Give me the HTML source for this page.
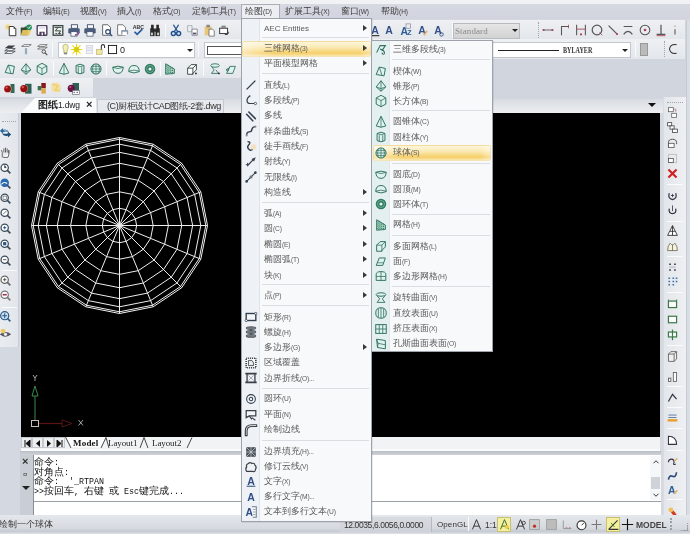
<!DOCTYPE html>
<html><head><meta charset="utf-8"><style>
*{margin:0;padding:0;box-sizing:border-box}
body{width:690px;height:534px;overflow:hidden;position:relative;will-change:transform;background:#d4d9e1;font-family:"Liberation Sans",sans-serif;font-size:9px;color:#333}
.a{position:absolute}
.mi{position:absolute;top:5px;font-size:9px;color:#3a3a3a;white-space:nowrap;line-height:13px}
.mi small{font-size:6.5px}
.dd{background:#f8f9fb;border:1px solid #9ea3ab;box-shadow:1px 1px 0 rgba(0,0,0,.08)}
.it{font-size:9px;color:#5a5a5a;white-space:nowrap;line-height:13px}
.it small{font-size:6.7px;letter-spacing:-0.2px}
.arr{width:0;height:0;border-left:4px solid #3a3a3a;border-top:3.5px solid transparent;border-bottom:3.5px solid transparent}
.hl{border:1px solid rgba(238,214,150,.55);border-radius:2px;background:linear-gradient(90deg,rgba(255,255,255,.45),rgba(255,255,255,0) 25%,rgba(255,255,255,0) 92%,rgba(255,255,255,.35)),linear-gradient(#fdf6dc,#fbe9b0 40%,#f6cf68 80%,#fae6ae)}
.tb{background:linear-gradient(#eef0f3,#e3e6eb)}
.vs{width:1px;background:#c3c8cf;border-right:1px solid #fafbfc}
.hs{height:1px;background:#c9ced5;border-bottom:1px solid #fafbfc}
.mono{font-family:"Liberation Mono",monospace}
</style></head><body>
<div class="a" style="left:0;top:0;width:690px;height:4px;background:#f1f2f4"></div>
<div class="a" style="left:0;top:4px;width:690px;height:15px;background:linear-gradient(#d6d9e2,#d1d4de)"></div>
<div class="mi" style="left:6px">文件<small>(F)</small></div>
<div class="mi" style="left:43px">编辑<small>(E)</small></div>
<div class="mi" style="left:80px">视图<small>(V)</small></div>
<div class="mi" style="left:117px">插入<small>(I)</small></div>
<div class="mi" style="left:153px">格式<small>(O)</small></div>
<div class="mi" style="left:191.5px">定制工具<small>(T)</small></div>
<div class="a" style="left:241px;top:4px;width:39px;height:15px;background:#eceef2;border:1px solid #a9aeb6;border-bottom:none"></div>
<div class="mi" style="left:245px">绘图<small>(D)</small></div>
<div class="mi" style="left:285px">扩展工具<small>(X)</small></div>
<div class="mi" style="left:340.5px">窗口<small>(W)</small></div>
<div class="mi" style="left:381px">帮助<small>(H)</small></div>
<div class="a" style="left:0;top:20px;width:690px;height:93px;background:#d1d6de"></div>
<div class="a" style="left:0;top:99px;width:690px;height:14px;background:linear-gradient(#d8dce2,#eceef1)"></div>
<div class="a tb" style="left:0;top:20px;width:685px;height:19px"></div>
<div class="a tb" style="left:0;top:39px;width:685px;height:20px"></div>
<div class="a tb" style="left:0;top:59px;width:242px;height:19px"></div>
<div class="a tb" style="left:0;top:78px;width:93px;height:19px"></div>
<div class="a" style="left:686px;top:20px;width:4px;height:496px;background:#d9dee5;border-left:1px solid #c3cad3"></div>
<svg class="a" style="left:3.5px;top:23.0px" width="14" height="14" viewBox="0 0 16 16"><circle cx="4.5" cy="4.5" r="3.5" fill="#f6e2a8" opacity=".9"/><path d="M3 4L6 5M4.5 2V7M2 5.5L7 3.5" stroke="#e8c060" stroke-width=".7"/><path d="M6 4H11L13.5 6.5V14.5H6Z" fill="#fff" stroke="#333" stroke-width="1.1"/><path d="M11 4V6.5H13.5" fill="#333"/></svg>
<svg class="a" style="left:19.0px;top:23.0px" width="14" height="14" viewBox="0 0 16 16"><path d="M2 5H6L7 4H10V14H2Z" fill="#3e4a30"/><path d="M4 8H14L12 14H2Z" fill="#eccb60" opacity=".9"/><circle cx="11.5" cy="5" r="3.2" fill="#2a8a60"/><path d="M10 5L11.3 6.3L13.3 3.6" stroke="#d8f8e8" fill="none" stroke-width="1.1"/></svg>
<svg class="a" style="left:35.0px;top:23.0px" width="14" height="14" viewBox="0 0 16 16"><rect x="2.5" y="3" width="11" height="11" fill="#fff" stroke="#4a3e58" stroke-width="1.6" rx=".5"/><path d="M4.5 3.5H11.5V7H4.5Z" fill="#e8e0f0"/><path d="M5 10H11V14H5Z" fill="#4a3e58"/><rect x="7.5" y="11" width="1.5" height="3" fill="#fff"/></svg>
<svg class="a" style="left:51.3px;top:23.0px" width="14" height="14" viewBox="0 0 16 16"><rect x="2.5" y="3" width="11" height="11" fill="#e8eee8" stroke="#404848" stroke-width="1.5"/><path d="M4 5H12M8 5L5 9H11L8 13M5 12H7M10 11V13M9 12H11" stroke="#3a4444" stroke-width="1.1" fill="none"/></svg>
<svg class="a" style="left:67.0px;top:23.0px" width="14" height="14" viewBox="0 0 16 16"><rect x="5" y="2" width="7" height="4" fill="#fff" stroke="#3a4a6a" stroke-width="1"/><rect x="1.5" y="6" width="13" height="6" fill="#4a5a7a" rx="1.5"/><rect x="4.5" y="10" width="7" height="5" fill="#fff" stroke="#3a4a6a" stroke-width=".8"/><path d="M9 13.5Q13.5 14 13.5 10" stroke="#8a5a9a" fill="none" stroke-width="1.8"/></svg>
<svg class="a" style="left:83.0px;top:23.0px" width="14" height="14" viewBox="0 0 16 16"><rect x="5" y="2" width="7" height="4" fill="#fff" stroke="#3a4a6a" stroke-width="1"/><rect x="1.5" y="6" width="13" height="6" fill="#4a5a7a" rx="1.5"/><rect x="4.5" y="10" width="7" height="5" fill="#fff" stroke="#3a4a6a" stroke-width=".8"/></svg>
<svg class="a" style="left:100.0px;top:23.0px" width="14" height="14" viewBox="0 0 16 16"><path d="M3 2H9L12 5V14H3Z" fill="#fff" stroke="#555" stroke-width="1"/><circle cx="9" cy="10" r="2.5" fill="none" stroke="#2a4a7a" stroke-width="1.3"/><path d="M11 12L14 15" stroke="#2a4a7a" stroke-width="1.5"/></svg>
<svg class="a" style="left:115.0px;top:23.0px" width="14" height="14" viewBox="0 0 16 16"><path d="M3 2H9L12 5V14H3Z" fill="#fff" stroke="#666" stroke-width="1"/><rect x="7" y="8" width="8" height="5" fill="#8a9aaa" rx="1"/><rect x="8.5" y="10" width="5" height="4" fill="#fff"/></svg>
<svg class="a" style="left:131.0px;top:23.0px" width="14" height="14" viewBox="0 0 16 16"><text x="8.5" y="7" font-size="6" font-weight="bold" text-anchor="middle" fill="#333" font-family="Liberation Sans">ABC</text><path d="M4 10L7 13L13 7" stroke="#2a5aa0" stroke-width="2" fill="none"/></svg>
<svg class="a" style="left:148.0px;top:23.0px" width="14" height="14" viewBox="0 0 16 16"><rect x="2.5" y="6" width="5" height="9" fill="#2a2a2a"/><rect x="8.5" y="6" width="5" height="9" fill="#2a2a2a"/><rect x="3.5" y="2" width="3" height="5" fill="#2a2a2a"/><rect x="9.5" y="2" width="3" height="5" fill="#2a2a2a"/><rect x="6" y="7" width="4" height="3" fill="#2a2a2a"/><rect x="3.5" y="11" width="2" height="3" fill="#ddd"/><rect x="10.5" y="11" width="2" height="3" fill="#ddd"/></svg>
<svg class="a" style="left:169.0px;top:23.0px" width="14" height="14" viewBox="0 0 16 16"><path d="M5 2L10 10M11 2L6 10" stroke="#1f4f8f" stroke-width="1.5"/><circle cx="5" cy="12" r="2.3" fill="none" stroke="#1f4f8f" stroke-width="1.6"/><circle cx="11" cy="12" r="2.3" fill="none" stroke="#1f4f8f" stroke-width="1.6"/></svg>
<svg class="a" style="left:185.0px;top:23.0px" width="14" height="14" viewBox="0 0 16 16"><path d="M3 3H8V10H3Z" fill="#eee" stroke="#8aa0a0" stroke-width=".8"/><path d="M8 7H14V14H8Z" fill="#fff" stroke="#667" stroke-width=".8"/><rect x="9" y="11" width="4" height="2" fill="#556"/></svg>
<svg class="a" style="left:202.0px;top:23.0px" width="14" height="14" viewBox="0 0 16 16"><rect x="3" y="4" width="8" height="10" fill="#e8c878"/><rect x="5" y="2" width="4" height="3" fill="#888"/><path d="M8 7H12L14 9V15H8Z" fill="#fff" stroke="#555" stroke-width=".8"/></svg>
<svg class="a" style="left:217.0px;top:23.0px" width="14" height="14" viewBox="0 0 16 16"><rect x="3" y="6" width="9" height="6" fill="#fff" stroke="#444" stroke-width="1.2"/><rect x="5" y="3" width="5" height="3" fill="#888"/><path d="M9 13Q13 14 13 10" stroke="#444" fill="none" stroke-width="1.2"/></svg>
<div class="a vs" style="left:165px;top:23px;height:14px"></div>
<svg class="a" style="left:368.0px;top:23.0px" width="14" height="14" viewBox="0 0 16 16"><text x="8" y="13" font-size="12" font-weight="bold" fill="#34508a" text-anchor="middle" font-family="Liberation Sans">A</text><path d="M3 14.5H13" stroke="#222" stroke-width="1.2"/></svg>
<svg class="a" style="left:382.0px;top:23.0px" width="14" height="14" viewBox="0 0 16 16"><text x="8" y="13" font-size="12" font-weight="bold" fill="#34508a" text-anchor="middle" font-family="Liberation Sans">A</text></svg>
<svg class="a" style="left:399.0px;top:23.0px" width="14" height="14" viewBox="0 0 16 16"><text x="6" y="14" font-size="12" font-weight="bold" fill="#2f5f96" text-anchor="middle" font-family="Liberation Sans">A</text><text x="12" y="14" font-size="8" font-weight="bold" fill="#2f5f96" text-anchor="middle" font-family="Liberation Sans">Z</text><rect x="8" y="1" width="5" height="5" fill="none" stroke="#889" stroke-width=".8"/></svg>
<svg class="a" style="left:415.0px;top:23.0px" width="14" height="14" viewBox="0 0 16 16"><text x="8" y="13" font-size="12" font-weight="bold" fill="#34508a" text-anchor="middle" font-family="Liberation Sans">A</text><path d="M10 14L14 9" stroke="#e0b070" stroke-width="2"/></svg>
<svg class="a" style="left:430.5px;top:23.0px" width="14" height="14" viewBox="0 0 16 16"><text x="8" y="13" font-size="12" font-weight="bold" fill="#34508a" text-anchor="middle" font-family="Liberation Sans">A</text><circle cx="12" cy="13" r="2" fill="none" stroke="#2f4f86"/></svg>
<div class="a vs" style="left:452px;top:22px;height:16px"></div>
<div class="a" style="left:453px;top:23px;width:67px;height:16px;background:linear-gradient(#e6e6e6,#d2d2d2);border:1px solid #b8bcc2"></div>
<div class="a" style="left:455px;top:26px;font-size:9px;color:#8a8a8a;line-height:10px;font-family:Liberation Serif;letter-spacing:0.1px">Standard</div>
<div class="a arr" style="left:512px;top:29px;border-left:3px solid transparent;border-right:3px solid transparent;border-top:3px solid #222;border-bottom:0"></div>
<div class="a" style="left:538px;top:22px;width:1px;height:16px;border-left:1px dotted #a0a6ae"></div>
<svg class="a" style="left:541.0px;top:23.0px" width="14" height="14" viewBox="0 0 16 16"><path d="M2 8H14" stroke="#555" stroke-width="1"/><circle cx="3" cy="8" r="1.2" fill="#b04050"/><circle cx="13" cy="8" r="1.2" fill="#b04050"/></svg>
<svg class="a" style="left:558.0px;top:23.0px" width="14" height="14" viewBox="0 0 16 16"><path d="M4 14V4H12" stroke="#555" stroke-width="1.2" fill="none"/><path d="M12 2V6" stroke="#b04050"/></svg>
<svg class="a" style="left:574.0px;top:23.0px" width="14" height="14" viewBox="0 0 16 16"><path d="M3 2V14M13 2V14" stroke="#555" stroke-width="1.2"/><path d="M3 7H13" stroke="#b04050"/><circle cx="8" cy="13" r="1.2" fill="#b04050"/></svg>
<svg class="a" style="left:590.0px;top:23.0px" width="14" height="14" viewBox="0 0 16 16"><circle cx="8" cy="8" r="5.5" fill="none" stroke="#555" stroke-width="1.4"/><path d="M11 11L14 14" stroke="#b04050"/></svg>
<svg class="a" style="left:606.0px;top:23.0px" width="14" height="14" viewBox="0 0 16 16"><path d="M3 3L13 13" stroke="#555" stroke-width="1.4"/><circle cx="12.5" cy="12.5" r="1.2" fill="#b04050"/></svg>
<svg class="a" style="left:621.0px;top:23.0px" width="14" height="14" viewBox="0 0 16 16"><path d="M3 13Q8 6 13 13" stroke="#555" stroke-width="1.4" fill="none"/><path d="M3 4H13" stroke="#555" stroke-width="1.2"/></svg>
<svg class="a" style="left:638.0px;top:23.0px" width="14" height="14" viewBox="0 0 16 16"><circle cx="8" cy="8" r="5.5" fill="none" stroke="#555" stroke-width="1.2"/><circle cx="8" cy="8" r="1.5" fill="#b04050"/></svg>
<svg class="a" style="left:654.0px;top:23.0px" width="14" height="14" viewBox="0 0 16 16"><path d="M8 2V13M3 13H13" stroke="#555" stroke-width="1.4"/><path d="M3 14.5H13" stroke="#b04050"/></svg>
<svg class="a" style="left:668.0px;top:23.0px" width="14" height="14" viewBox="0 0 16 16"><path d="M8 3V4M8 7V13" stroke="#555" stroke-width="1.2"/></svg>
<svg class="a" style="left:2.5999999999999996px;top:41.5px" width="14" height="14" viewBox="0 0 16 16"><path d="M2 7L6 4H14L10 7Z" fill="#3a3f48"/><path d="M2 10L6 7.5H14L10 10Z" fill="#fff" stroke="#3a3f48" stroke-width=".9"/><path d="M2 13L6 10.5H14L10 13Z" fill="#fff" stroke="#3a3f48" stroke-width=".9"/></svg>
<svg class="a" style="left:18.5px;top:41.5px" width="14" height="14" viewBox="0 0 16 16"><path d="M3 5L6 3H14L11 5Z" fill="#fff" stroke="#555" stroke-width=".8"/><path d="M8 7V14" stroke="#9ab" stroke-width="2.5"/></svg>
<svg class="a" style="left:35.0px;top:41.5px" width="14" height="14" viewBox="0 0 16 16"><path d="M3 5L6 3H14L11 5Z" fill="#fff" stroke="#555" stroke-width=".8"/><path d="M3 8L6 6H14L11 8Z" fill="#fff" stroke="#555" stroke-width=".8"/><circle cx="10" cy="11" r="2" fill="none" stroke="#444" stroke-width="1"/><path d="M11.5 12.5L14 15" stroke="#444" stroke-width="1.2"/></svg>
<div class="a vs" style="left:52px;top:42px;height:15px"></div>
<div class="a" style="left:58px;top:42px;width:137px;height:16px;background:#fff;border:1px solid #c2c7ce"></div>
<svg class="a" style="left:58.5px;top:43.0px" width="13" height="13" viewBox="0 0 16 16"><path d="M5 3Q8 0 11 3Q12 6 10 9V12H6V9Q4 6 5 3Z" fill="#f4f0b0" stroke="#9a9a60" stroke-width=".8"/><rect x="6" y="12" width="4" height="2" fill="#888"/></svg>
<svg class="a" style="left:70.0px;top:43.0px" width="13" height="13" viewBox="0 0 16 16"><circle cx="8" cy="8" r="3.5" fill="#f0e020"/><path d="M8 1V15M1 8H15M3 3L13 13M13 3L3 13" stroke="#e8d818" stroke-width="1.3"/><circle cx="8" cy="8" r="3" fill="#d8c810"/></svg>
<svg class="a" style="left:82.5px;top:43.0px" width="13" height="13" viewBox="0 0 16 16"><rect x="4" y="3" width="8" height="10" fill="#f2f2f6" stroke="#c8c8d8" stroke-width=".8"/><path d="M5 6H11M5 9H11" stroke="#c8c8d8"/></svg>
<svg class="a" style="left:93.5px;top:43.0px" width="13" height="13" viewBox="0 0 16 16"><rect x="3" y="8" width="7" height="6" fill="#f0e8a0" stroke="#b8b070" stroke-width=".8"/><path d="M9 8V4Q9 2 11 2Q13 2 13 4V6" stroke="#333" stroke-width="1.3" fill="none"/></svg>
<svg class="a" style="left:105.5px;top:43.0px" width="13" height="13" viewBox="0 0 16 16"><rect x="3" y="3" width="10" height="10" fill="#fff" stroke="#222" stroke-width="1.2"/></svg>
<div class="a" style="left:120px;top:44px;font-size:9px;color:#222;line-height:12px">0</div>
<div class="a arr" style="left:187px;top:49px;border-left:3px solid transparent;border-right:3px solid transparent;border-top:3px solid #222;border-bottom:0"></div>
<div class="a vs" style="left:198px;top:42px;height:15px"></div>
<div class="a" style="left:204px;top:42px;width:40px;height:16px;background:#fff;border:1px solid #c2c7ce"></div>
<div class="a" style="left:207px;top:46px;width:40px;height:9px;background:#fff;border:1.5px solid #555"></div>
<div class="a" style="left:490px;top:42px;width:141px;height:16px;background:#fff;border:1px solid #c2c7ce"></div>
<div class="a" style="left:498px;top:49.5px;width:61px;height:1px;background:#222"></div>
<div class="a" style="left:563px;top:45px;font-size:9px;font-weight:bold;color:#333;line-height:10px;font-family:Liberation Serif;transform:scaleX(0.68);transform-origin:0 0">BYLAYER</div>
<div class="a arr" style="left:622px;top:49px;border-left:3px solid transparent;border-right:3px solid transparent;border-top:3px solid #222;border-bottom:0"></div>
<div class="a vs" style="left:635px;top:42px;height:15px"></div>
<div class="a" style="left:640px;top:43px;width:8px;height:13px;background:#bbb;border:1px solid #999"></div>
<div class="a" style="left:664px;top:41px;width:1px;height:16px;border-left:1px dotted #a0a6ae"></div>
<svg class="a" style="left:666.0px;top:42.0px" width="14" height="14" viewBox="0 0 16 16"><path d="M12 3Q5 2 4 8Q5 14 12 13" stroke="#333" stroke-width="1.2" fill="none"/></svg>
<div class="a vs" style="left:53px;top:61px;height:15px"></div>
<div class="a vs" style="left:106px;top:61px;height:15px"></div>
<div class="a vs" style="left:160px;top:61px;height:15px"></div>
<div class="a vs" style="left:203px;top:61px;height:15px"></div>
<svg class="a" style="left:2.5999999999999996px;top:62.0px" width="14" height="14" viewBox="0 0 16 16"><path d="M2.5 12L6 3.5L13 5L11.5 13.5Z" stroke="#2f7060" stroke-width="1.1" fill="#dff2ec"/><path d="M6 3.5L9 12.5" stroke="#2f7060" stroke-width=".9"/></svg>
<svg class="a" style="left:19.0px;top:62.0px" width="14" height="14" viewBox="0 0 16 16"><path d="M8 2L13.5 9L8 14L2.5 9Z" stroke="#2f7060" stroke-width="1.1" fill="#dff2ec"/><path d="M8 2V14M2.5 9L8 11L13.5 9" stroke="#2f7060" stroke-width=".9" fill="none"/></svg>
<svg class="a" style="left:34.7px;top:62.0px" width="14" height="14" viewBox="0 0 16 16"><path d="M8 1.5L13.5 4.5V11.5L8 14.5L2.5 11.5V4.5Z" stroke="#2f7060" stroke-width="1.1" fill="#dff2ec"/><path d="M2.5 4.5L8 7.5L13.5 4.5M8 7.5V14.5" stroke="#2f7060" stroke-width=".9" fill="none"/></svg>
<svg class="a" style="left:56.5px;top:62.0px" width="14" height="14" viewBox="0 0 16 16"><path d="M8 1.5L13.5 12.5Q8 15.5 2.5 12.5Z" stroke="#2f7060" stroke-width="1.1" fill="#dff2ec"/><path d="M8 1.5L8 14" stroke="#2f7060" stroke-width=".8"/></svg>
<svg class="a" style="left:73.0px;top:62.0px" width="14" height="14" viewBox="0 0 16 16"><path d="M3.5 4V12Q8 15 12.5 12V4Q8 1 3.5 4Z" stroke="#2f7060" stroke-width="1.1" fill="#dff2ec"/><path d="M3.5 4Q8 7 12.5 4M6 6V13.5M10 6V13.5" stroke="#2f7060" stroke-width=".9" fill="none"/></svg>
<svg class="a" style="left:88.6px;top:62.0px" width="14" height="14" viewBox="0 0 16 16"><circle cx="8" cy="8" r="5.8" stroke="#2f7060" stroke-width="1.1" fill="#dff2ec"/><path d="M2.2 8H13.8M8 2.2V13.8M5 3Q3 8 5 13M11 3Q13 8 11 13M3 5H13M3 11H13" stroke="#2f7060" stroke-width="0.8" fill="none"/></svg>
<svg class="a" style="left:110.5px;top:62.0px" width="14" height="14" viewBox="0 0 16 16"><path d="M2 6Q8 3.5 14 6Q13.5 13 8 13Q2.5 13 2 6Z" stroke="#2f7060" stroke-width="1.1" fill="#dff2ec"/><path d="M2 6Q8 9 14 6" stroke="#2f7060" stroke-width=".9" fill="none"/></svg>
<svg class="a" style="left:127.0px;top:62.0px" width="14" height="14" viewBox="0 0 16 16"><path d="M2 11Q2 4 8 4Q14 4 14 11Q8 14 2 11Z" stroke="#2f7060" stroke-width="1.1" fill="#dff2ec"/><path d="M2 10.5Q8 8 14 10.5" stroke="#2f7060" stroke-width=".9" fill="none"/></svg>
<svg class="a" style="left:142.5px;top:62.0px" width="14" height="14" viewBox="0 0 16 16"><circle cx="8" cy="8" r="6" fill="#2f7a60"/><circle cx="8" cy="8" r="4" fill="none" stroke="#8fcfb0" stroke-width=".7"/><circle cx="8" cy="8" r="1.8" fill="#e8f8f0"/></svg>
<svg class="a" style="left:163.4px;top:62.0px" width="14" height="14" viewBox="0 0 16 16"><path d="M3 2L8 5L13 8V13L3 14Z" fill="#a8d8c0" stroke="#2f7060" stroke-width="1"/><path d="M3 4.5H8M3 7H11M3 9.5H13M3 12H13M5.5 3V14M8 5V14M10.5 6.5V14" stroke="#2f7060" stroke-width="0.9" stroke-dasharray="1.2 1.2"/></svg>
<svg class="a" style="left:185.0px;top:62.0px" width="14" height="14" viewBox="0 0 16 16"><path d="M3 14V7L7 3H13V9L9 13V14Z M3 7H9V14 M9 7L13 3" stroke="#2a3a3a" stroke-width="1" fill="#fff"/><circle cx="12.5" cy="13" r="1" fill="#222"/></svg>
<svg class="a" style="left:207.5px;top:62.0px" width="14" height="14" viewBox="0 0 16 16"><ellipse cx="8" cy="4" rx="5" ry="2" stroke="#2f7060" stroke-width="1" fill="#dff2ec"/><path d="M4 5L7 9L4 13H12L9 9" stroke="#2f7060" stroke-width="1" fill="none"/><circle cx="12.5" cy="13" r="1" fill="#222"/></svg>
<svg class="a" style="left:224.0px;top:62.0px" width="14" height="14" viewBox="0 0 16 16"><path d="M3 13L7 5H13L10 13Z M7 5L4 9" stroke="#2f7060" stroke-width="1" fill="#dff2ec"/><circle cx="4" cy="9" r="1.3" fill="none" stroke="#2f7060"/></svg>
<svg class="a" style="left:0;top:78px" width="95" height="20" viewBox="0 78 95 20"><rect x="10.5" y="84" width="4" height="9" fill="#2f6a58"/><circle cx="7.6" cy="88.9" r="4" fill="#f4c8c8" opacity=".6"/><circle cx="7.6" cy="88.9" r="3.4" fill="#9a1010"/><circle cx="6.6" cy="87.6" r="1.1" fill="#d86060"/><rect x="25" y="83.8" width="6.5" height="9.8" fill="#2a5e50"/><circle cx="23.9" cy="88.6" r="4.1" fill="#f4c8c8" opacity=".6"/><circle cx="23.9" cy="88.6" r="3.6" fill="#9a1010"/><circle cx="22.8" cy="87.2" r="1.1" fill="#d86060"/><rect x="41.3" y="83" width="4.5" height="5.2" fill="#8a1818"/><rect x="37.7" y="86" width="3.8" height="4.3" fill="#3a7050"/><rect x="41.3" y="88.2" width="4.5" height="5.4" fill="#e0a850"/><circle cx="56" cy="87.5" r="5" fill="#f4dc90" opacity=".75"/><path d="M52 84L58 86L55 90L60 91" stroke="#f0d070" stroke-width="1.5" fill="none"/><rect x="72.5" y="83" width="6.5" height="10" fill="#2f6058"/><circle cx="71.3" cy="88.3" r="3.6" fill="#6a1440"/><circle cx="70.3" cy="87" r="1" fill="#b06080"/><rect x="72.5" y="90.3" width="7" height="4" fill="#fff" stroke="#445" stroke-width=".5"/><path d="M73.5 92.3H75M76.5 92.3H78" stroke="#556" stroke-width="1"/></svg>
<div class="a" style="left:21px;top:98px;width:75px;height:15px;background:#fafbfc;clip-path:polygon(0 100%,14px 0,100% 0,100% 100%)"></div>
<div class="a" style="left:38px;top:99px;font-size:10px;font-weight:bold;color:#222;line-height:12px;white-space:nowrap">图纸<span style="font-weight:normal;font-size:8.5px;letter-spacing:-0.2px">1.dwg</span></div>
<div class="a" style="left:86px;top:98px;font-size:11px;font-weight:bold;color:#222;line-height:12px">×</div>
<div class="a" style="left:97px;top:99px;width:127px;height:14px;background:#e6e9ed;border:1px solid #c5cad1;border-bottom:none"></div>
<div class="a" style="left:107px;top:100px;font-size:9px;color:#333;line-height:12px;white-space:nowrap;letter-spacing:-0.4px">(C)厨柜设计CAD图纸-2套.dwg</div>
<div class="a" style="left:648px;top:103px;width:0;height:0;border-left:4px solid transparent;border-right:4px solid transparent;border-top:4px solid #111"></div>
<div class="a" style="left:21px;top:113px;width:639px;height:324px;background:#000"></div>
<svg class="a" style="left:0;top:0" width="690" height="534"><g fill="none" stroke="#efefef" stroke-width="1"><polygon points="136.67,225.50 135.36,218.93 131.64,213.36 126.07,209.64 119.50,208.33 112.93,209.64 107.36,213.36 103.64,218.93 102.33,225.50 103.64,232.07 107.36,237.64 112.93,241.36 119.50,242.67 126.07,241.36 131.64,237.64 135.36,232.07"/>
<polygon points="153.18,225.50 150.61,212.61 143.31,201.69 132.39,194.39 119.50,191.82 106.61,194.39 95.69,201.69 88.39,212.61 85.82,225.50 88.39,238.39 95.69,249.31 106.61,256.61 119.50,259.18 132.39,256.61 143.31,249.31 150.61,238.39"/>
<polygon points="168.39,225.50 164.67,206.79 154.07,190.93 138.21,180.33 119.50,176.61 100.79,180.33 84.93,190.93 74.33,206.79 70.61,225.50 74.33,244.21 84.93,260.07 100.79,270.67 119.50,274.39 138.21,270.67 154.07,260.07 164.67,244.21"/>
<polygon points="181.73,225.50 176.99,201.69 163.50,181.50 143.31,168.01 119.50,163.27 95.69,168.01 75.50,181.50 62.01,201.69 57.27,225.50 62.01,249.31 75.50,269.50 95.69,282.99 119.50,287.73 143.31,282.99 163.50,269.50 176.99,249.31"/>
<polygon points="192.67,225.50 187.10,197.50 171.24,173.76 147.50,157.90 119.50,152.33 91.50,157.90 67.76,173.76 51.90,197.50 46.33,225.50 51.90,253.50 67.76,277.24 91.50,293.10 119.50,298.67 147.50,293.10 171.24,277.24 187.10,253.50"/>
<polygon points="200.80,225.50 194.61,194.39 176.99,168.01 150.61,150.39 119.50,144.20 88.39,150.39 62.01,168.01 44.39,194.39 38.20,225.50 44.39,256.61 62.01,282.99 88.39,300.61 119.50,306.80 150.61,300.61 176.99,282.99 194.61,256.61"/>
<polygon points="205.81,225.50 199.24,192.47 180.53,164.47 152.53,145.76 119.50,139.19 86.47,145.76 58.47,164.47 39.76,192.47 33.19,225.50 39.76,258.53 58.47,286.53 86.47,305.24 119.50,311.81 152.53,305.24 180.53,286.53 199.24,258.53"/>
<polygon points="207.50,225.50 200.80,191.82 181.73,163.27 153.18,144.20 119.50,137.50 85.82,144.20 57.27,163.27 38.20,191.82 31.50,225.50 38.20,259.18 57.27,287.73 85.82,306.80 119.50,313.50 153.18,306.80 181.73,287.73 200.80,259.18"/>
<line x1="207.50" y1="225.50" x2="31.50" y2="225.50"/>
<line x1="200.80" y1="191.82" x2="38.20" y2="259.18"/>
<line x1="181.73" y1="163.27" x2="57.27" y2="287.73"/>
<line x1="153.18" y1="144.20" x2="85.82" y2="306.80"/>
<line x1="119.50" y1="137.50" x2="119.50" y2="313.50"/>
<line x1="85.82" y1="144.20" x2="153.18" y2="306.80"/>
<line x1="57.27" y1="163.27" x2="181.73" y2="287.73"/>
<line x1="38.20" y1="191.82" x2="200.80" y2="259.18"/>
</g><g fill="none"><path d="M35 420V396" stroke="#3c8a4c" stroke-width="1"/><path d="M35 386L32 396H38Z" stroke="#3c8a4c" stroke-width="1"/><path d="M39 423.5H62" stroke="#5a1414" stroke-width="1.2"/><path d="M72 423.5L62 420V427Z" stroke="#5a1414" stroke-width="1"/><rect x="31.5" y="420.5" width="7" height="6" stroke="#c8c0b8" stroke-width="1"/><path d="M33 375L35 378L37 375M35 378V381" stroke="#ccc" stroke-width=".8"/><path d="M78.5 420L83 425.5M83 420L78.5 425.5" stroke="#ccc" stroke-width=".8"/></g></svg>
<div class="a" style="left:0;top:113px;width:19px;height:234px;background:linear-gradient(90deg,#e9ecf0,#e2e5ea);border-right:1px solid #c8cdd4"></div>
<div class="a" style="left:2px;top:121px;width:14px;height:1px;border-top:1px dotted #a0a6ae"></div>
<svg class="a" style="left:-1.0px;top:126.19999999999999px" width="13" height="13" viewBox="0 0 16 16"><path d="M1 6L5 2.5V4.5Q11 3.5 12 8Q9 6 5 7.5V9.5Z" fill="#2a6a9a"/><path d="M15 10.5L11 14V12Q5 13 4 8.5Q7 10.5 11 9V7Z" fill="#1f4f7a"/><path d="M6 5.5Q9 5 10.5 6.5" stroke="#a8d0f0" stroke-width=".8" fill="none"/></svg>
<svg class="a" style="left:-1.0px;top:145.9px" width="13" height="13" viewBox="0 0 16 16"><path d="M4 14V8L3 5M6 8V3M8 8V2M10 8V3M12 9V5Q13 10 11 14H5" stroke="#555" stroke-width="1.1" fill="#fff"/></svg>
<svg class="a" style="left:-1.0px;top:161.6px" width="13" height="13" viewBox="0 0 16 16"><circle cx="7" cy="7" r="4.5" fill="#fff" stroke="#3a4a5a" stroke-width="1.5"/><path d="M10 10L14 14" stroke="#3a4a5a" stroke-width="2"/><path d="M7 4V7H9" stroke="#3a4a5a"/></svg>
<svg class="a" style="left:-1.0px;top:177.4px" width="13" height="13" viewBox="0 0 16 16"><circle cx="7" cy="7" r="4.5" fill="#2a6ab0" stroke="#2a6ab0" stroke-width="1.5"/><path d="M10 10L14 14" stroke="#3a4a5a" stroke-width="2"/><path d="M3 9Q6 5 10 8" stroke="#fff" stroke-width="1.3" fill="none"/></svg>
<svg class="a" style="left:-1.0px;top:192.2px" width="13" height="13" viewBox="0 0 16 16"><circle cx="7" cy="7" r="4.5" fill="#fff" stroke="#3a4a5a" stroke-width="1.5"/><path d="M10 10L14 14" stroke="#3a4a5a" stroke-width="2"/><rect x="5" y="5" width="4" height="4" fill="none" stroke="#555" stroke-width=".8"/></svg>
<svg class="a" style="left:-1.0px;top:206.9px" width="13" height="13" viewBox="0 0 16 16"><circle cx="7" cy="7" r="4.5" fill="#fff" stroke="#3a4a5a" stroke-width="1.5"/><path d="M10 10L14 14" stroke="#3a4a5a" stroke-width="2"/><path d="M5 9L9 5" stroke="#555"/></svg>
<svg class="a" style="left:-1.0px;top:222.2px" width="13" height="13" viewBox="0 0 16 16"><circle cx="7" cy="7" r="4.5" fill="#fff" stroke="#3a4a5a" stroke-width="1.5"/><path d="M10 10L14 14" stroke="#3a4a5a" stroke-width="2"/><path d="M5 7H9M7 5V9" stroke="#2a5a8a" stroke-width="1.2"/></svg>
<svg class="a" style="left:-1.0px;top:237.9px" width="13" height="13" viewBox="0 0 16 16"><circle cx="7" cy="7" r="4.5" fill="#fff" stroke="#3a4a5a" stroke-width="1.5"/><path d="M10 10L14 14" stroke="#3a4a5a" stroke-width="2"/><rect x="5" y="5" width="4" height="4" fill="#2a5a8a"/></svg>
<svg class="a" style="left:-1.0px;top:253.7px" width="13" height="13" viewBox="0 0 16 16"><circle cx="7" cy="7" r="4.5" fill="#fff" stroke="#3a4a5a" stroke-width="1.5"/><path d="M10 10L14 14" stroke="#3a4a5a" stroke-width="2"/><path d="M5 7H9" stroke="#555" stroke-width="1.2"/></svg>
<svg class="a" style="left:-1.0px;top:274.4px" width="13" height="13" viewBox="0 0 16 16"><circle cx="7" cy="7" r="4.5" fill="#fff" stroke="#666" stroke-width="1.5"/><path d="M10 10L14 14" stroke="#666" stroke-width="2"/><path d="M5 7H9M7 5V9" stroke="#555" stroke-width="1.2"/></svg>
<svg class="a" style="left:-1.0px;top:289.1px" width="13" height="13" viewBox="0 0 16 16"><circle cx="7" cy="7" r="4.5" fill="#fff" stroke="#777" stroke-width="1.5"/><path d="M10 10L14 14" stroke="#777" stroke-width="2"/><path d="M4.5 7H9.5" stroke="#a03050" stroke-width="2"/></svg>
<svg class="a" style="left:-1.0px;top:310.2px" width="13" height="13" viewBox="0 0 16 16"><circle cx="7" cy="7" r="5" fill="#cfe0f0" stroke="#2a5a8a" stroke-width="1.5"/><path d="M4 7H10M7 4V10" stroke="#2a5a8a" stroke-width="1.3"/><path d="M10.5 10.5L14 14" stroke="#2a5a8a" stroke-width="2"/></svg>
<svg class="a" style="left:-1.0px;top:327.0px" width="13" height="13" viewBox="0 0 16 16"><path d="M1 9Q8 3 15 9Q8 15 1 9Z" fill="#556"/><circle cx="8" cy="9" r="2" fill="#eee"/><circle cx="5" cy="5" r="3" fill="#f0c860"/></svg>
<div class="a hs" style="left:2px;top:270px;width:15px"></div>
<div class="a hs" style="left:2px;top:306.5px;width:15px"></div>
<div class="a" style="left:663px;top:97px;width:23px;height:419px;background:linear-gradient(90deg,#e3e6ea,#eef0f3);border-left:1px solid #d8dce1"></div>
<div class="a" style="left:667px;top:102px;width:16px;height:1px;border-top:1px dotted #a0a6ae"></div>
<svg class="a" style="left:666.0px;top:105.5px" width="13" height="13" viewBox="0 0 16 16"><rect x="3" y="2" width="6" height="5" fill="#fff" stroke="#666"/><rect x="7" y="9" width="6" height="5" fill="#fff" stroke="#666"/><path d="M10 4H12V7" stroke="#b07080" fill="none"/></svg>
<svg class="a" style="left:666.0px;top:121.0px" width="13" height="13" viewBox="0 0 16 16"><rect x="2" y="2" width="5" height="4" fill="#fff" stroke="#444"/><rect x="5" y="6" width="5" height="4" fill="#fff" stroke="#444"/><rect x="8" y="10" width="6" height="4" fill="#fff" stroke="#444"/></svg>
<svg class="a" style="left:666.0px;top:135.5px" width="13" height="13" viewBox="0 0 16 16"><path d="M3 14V8Q3 4 8 4Q13 4 13 8V10" stroke="#555" fill="none" stroke-width="1.2"/><rect x="3" y="9" width="7" height="5" fill="#fff" stroke="#555"/></svg>
<svg class="a" style="left:666.0px;top:151.5px" width="13" height="13" viewBox="0 0 16 16"><rect x="3" y="3" width="10" height="10" fill="none" stroke="#999" stroke-dasharray="1.5 1"/><rect x="3" y="8" width="6" height="5" fill="#fff" stroke="#555"/></svg>
<svg class="a" style="left:666.0px;top:167.2px" width="13" height="13" viewBox="0 0 16 16"><path d="M3 3L13 13M13 3L3 13" stroke="#d02020" stroke-width="2.6"/></svg>
<svg class="a" style="left:666.0px;top:188.5px" width="13" height="13" viewBox="0 0 16 16"><path d="M4 5Q2 12 8 13Q14 12 12 5" stroke="#334" stroke-width="1.5" fill="none"/><path d="M6 8H10M8 6V10" stroke="#334"/></svg>
<svg class="a" style="left:666.0px;top:203.2px" width="13" height="13" viewBox="0 0 16 16"><path d="M4 7Q3 13 8 13Q13 13 12 7" stroke="#334" stroke-width="1.5" fill="none"/><path d="M8 3V10" stroke="#334"/></svg>
<svg class="a" style="left:666.0px;top:223.9px" width="13" height="13" viewBox="0 0 16 16"><path d="M8 2L2 14H14Z M8 2V14 M5 9H11" stroke="#333" stroke-width="1.1" fill="#fff"/></svg>
<svg class="a" style="left:666.0px;top:239.5px" width="13" height="13" viewBox="0 0 16 16"><path d="M2 13Q2 7 5 4Q8 8 11 4Q14 7 14 13Z M8 6V13" stroke="#6a6a50" stroke-width="1" fill="#f4f2e0"/></svg>
<svg class="a" style="left:666.0px;top:261.3px" width="13" height="13" viewBox="0 0 16 16"><path d="M4 4H6M10 4H12M4 11H6M10 11H12" stroke="#334" stroke-width="2"/><path d="M4 7.5H12" stroke="#9ab" stroke-width="1"/></svg>
<svg class="a" style="left:666.0px;top:275.0px" width="13" height="13" viewBox="0 0 16 16"><path d="M3 4H5M8 4H10M3 8H5M8 8H10M3 12H5M8 12H10M12 4H14M12 8H14" stroke="#3a70b0" stroke-width="1.8"/></svg>
<svg class="a" style="left:666.0px;top:297.2px" width="13" height="13" viewBox="0 0 16 16"><rect x="3" y="5" width="10" height="8" fill="#fff" stroke="#3a7a4a" stroke-width="1.5"/><path d="M3 5V3M13 5V3" stroke="#3a7a4a"/></svg>
<svg class="a" style="left:666.0px;top:312.5px" width="13" height="13" viewBox="0 0 16 16"><rect x="3" y="4" width="10" height="8" fill="#fff" stroke="#3a7a4a" stroke-width="1.5"/></svg>
<svg class="a" style="left:666.0px;top:327.7px" width="13" height="13" viewBox="0 0 16 16"><rect x="3" y="5" width="10" height="6" fill="#fff" stroke="#3a7a4a" stroke-width="1.5"/><path d="M8 2V15" stroke="#3a7a4a" stroke-width="1.5"/></svg>
<svg class="a" style="left:666.0px;top:349.5px" width="13" height="13" viewBox="0 0 16 16"><path d="M3 5L6 2H13V11L10 14H3Z M3 5H10V14 M10 5L13 2" stroke="#555" stroke-width="1" fill="#f0f0f0"/></svg>
<svg class="a" style="left:666.0px;top:370.0px" width="13" height="13" viewBox="0 0 16 16"><rect x="3" y="10" width="3" height="4" fill="#fff" stroke="#555"/><rect x="9" y="3" width="4" height="11" fill="#fff" stroke="#555"/></svg>
<svg class="a" style="left:666.0px;top:390.5px" width="13" height="13" viewBox="0 0 16 16"><path d="M3 13L8 4L13 10" stroke="#334" stroke-width="1.5" fill="none"/></svg>
<svg class="a" style="left:666.0px;top:411.2px" width="13" height="13" viewBox="0 0 16 16"><path d="M3 5H13M3 8H13" stroke="#3a5a8a" stroke-width=".9"/><rect x="2" y="10" width="12" height="3" fill="#e8a030"/></svg>
<svg class="a" style="left:666.0px;top:433.0px" width="13" height="13" viewBox="0 0 16 16"><path d="M3 14V4Q13 4 13 14Z" fill="#fff" stroke="#334" stroke-width="1.3"/></svg>
<svg class="a" style="left:666.0px;top:454.5px" width="13" height="13" viewBox="0 0 16 16"><path d="M3 9Q3 5 7 5Q10 5 10 9Q8 13 12 11" stroke="#334" stroke-width="1.4" fill="none"/><path d="M10 8L14 4" stroke="#e0b070" stroke-width="2"/></svg>
<svg class="a" style="left:666.0px;top:469.3px" width="13" height="13" viewBox="0 0 16 16"><path d="M3 13Q4 7 8 9Q12 11 13 4" stroke="#2a4a7a" stroke-width="2" fill="none"/></svg>
<svg class="a" style="left:666.0px;top:483.0px" width="13" height="13" viewBox="0 0 16 16"><text x="7" y="13" font-size="13" font-weight="bold" fill="#2f5f96" text-anchor="middle" font-family="Liberation Sans">A</text><path d="M10 13L14 9" stroke="#e0b070" stroke-width="2"/></svg>
<svg class="a" style="left:666.0px;top:504.5px" width="13" height="13" viewBox="0 0 16 16"><path d="M4 4Q10 6 13 12L10 14Q6 10 4 4Z" fill="#d04020"/><circle cx="6" cy="6" r="3" fill="#f0c060"/></svg>
<div class="a hs" style="left:667px;top:183.5px;width:16px"></div>
<div class="a hs" style="left:667px;top:220.5px;width:16px"></div>
<div class="a hs" style="left:667px;top:256px;width:16px"></div>
<div class="a hs" style="left:667px;top:292px;width:16px"></div>
<div class="a hs" style="left:667px;top:345px;width:16px"></div>
<div class="a hs" style="left:667px;top:386.4px;width:16px"></div>
<div class="a hs" style="left:667px;top:407px;width:16px"></div>
<div class="a hs" style="left:667px;top:428px;width:16px"></div>
<div class="a hs" style="left:667px;top:449.5px;width:16px"></div>
<div class="a hs" style="left:667px;top:499px;width:16px"></div>
<div class="a" style="left:21px;top:437px;width:639px;height:14px;background:linear-gradient(#f2f3f5 0,#f2f3f5 85%,#fafbfc 85%)"></div>
<div class="a" style="left:21px;top:437px;width:11px;height:11px;background:#eceef0;border:1px solid #c5c9cf"></div>
<div class="a" style="left:32px;top:437px;width:11px;height:11px;background:#eceef0;border:1px solid #c5c9cf"></div>
<div class="a" style="left:43px;top:437px;width:11px;height:11px;background:#eceef0;border:1px solid #c5c9cf"></div>
<div class="a" style="left:54px;top:437px;width:11px;height:11px;background:#eceef0;border:1px solid #c5c9cf"></div>
<svg class="a" style="left:21px;top:437px" width="12" height="12" viewBox="0 0 12 12"><path d="M4 3V10M9 3L5 6.5L9 10Z" stroke="#111" fill="#111"/></svg>
<svg class="a" style="left:32px;top:437px" width="12" height="12" viewBox="0 0 12 12"><path d="M8 3L4 6.5L8 10Z" fill="#111"/></svg>
<svg class="a" style="left:43px;top:437px" width="12" height="12" viewBox="0 0 12 12"><path d="M4 3L8 6.5L4 10Z" fill="#111"/></svg>
<svg class="a" style="left:54px;top:437px" width="12" height="12" viewBox="0 0 12 12"><path d="M3 3L7 6.5L3 10Z M8 3V10" stroke="#111" fill="#111"/></svg>
<svg class="a" style="left:60px;top:437px" width="140" height="12"><path d="M5 0L11 11H41L46 0Z" fill="#fcfcfd"/><path d="M5.5 0L11 11M41 11L46 0.5L49 11M80 11L84 0.5L88 11M127 11L132 0.5" fill="none" stroke="#333" stroke-width=".9"/><path d="M11 11H41M49 11H80M88 11H127" stroke="#e8eaec" stroke-width=".8"/></svg>
<div class="a" style="left:73px;top:438px;font-size:9px;font-weight:bold;color:#111;line-height:10px;letter-spacing:0.2px;font-family:Liberation Serif">Model</div>
<div class="a" style="left:108px;top:438px;font-size:9px;color:#222;line-height:10px;letter-spacing:-0.1px;font-family:Liberation Serif">Layout1</div>
<div class="a" style="left:152px;top:438px;font-size:9px;color:#222;line-height:10px;letter-spacing:-0.1px;font-family:Liberation Serif">Layout2</div>
<div class="a" style="left:20px;top:451px;width:641px;height:4px;background:linear-gradient(#b9bec5,#cfd3d9)"></div>
<div class="a" style="left:20px;top:455px;width:13px;height:60px;background:#c9ced5"></div>
<div class="a" style="left:33px;top:455px;width:628px;height:61px;background:#fff;border-left:1px solid #8a8f96"></div>
<div class="a" style="left:34px;top:500.5px;width:627px;height:1px;background:#9aa0a8"></div>
<div class="a" style="left:22px;top:456px;font-size:11px;font-weight:bold;color:#333;line-height:11px">×</div>
<div class="a" style="left:23px;top:470px;font-size:8px;color:#444;line-height:9px">¤</div>
<div class="a" style="left:22px;top:486px;width:0;height:0;border-left:4px solid transparent;border-right:4px solid transparent;border-top:4px solid #222"></div>
<div class="a" style="left:34px;top:457.3px;font-size:10px;color:#111;line-height:10px;white-space:nowrap">命令<span style="font-family:Liberation Mono;font-size:8.33px">:</span></div>
<div class="a" style="left:34px;top:466.6px;font-size:10px;color:#111;line-height:10px;white-space:nowrap">对角点<span style="font-family:Liberation Mono;font-size:8.33px">:</span></div>
<div class="a" style="left:34px;top:475.8px;font-size:10px;color:#111;line-height:10px;white-space:nowrap">命令<span style="font-family:Liberation Mono;font-size:8.33px">:&nbsp;&nbsp;'_RTPAN</span></div>
<div class="a" style="left:34px;top:486.3px;font-size:10px;color:#111;line-height:10px;white-space:nowrap"><span style="font-family:Liberation Mono;font-size:8.33px">>></span>按回车<span style="font-family:Liberation Mono;font-size:8.33px">,&nbsp;</span>右键<span style="font-family:Liberation Mono;font-size:8.33px">&nbsp;</span>或<span style="font-family:Liberation Mono;font-size:8.33px">&nbsp;Esc</span>键完成<span style="font-family:Liberation Mono;font-size:8.33px">...</span></div>
<div class="a" style="left:650px;top:456px;width:11px;height:44px;background:#f6f7f8"></div>
<div class="a" style="left:651px;top:477px;width:9px;height:12px;background:#cfd2d6"></div>
<svg class="a" style="left:650.5px;top:457.0px" width="10" height="10" viewBox="0 0 16 16"><path d="M4 10L8 6L12 10" stroke="#333" stroke-width="1.6" fill="none"/></svg>
<svg class="a" style="left:650.5px;top:490.0px" width="10" height="10" viewBox="0 0 16 16"><path d="M4 6L8 10L12 6" stroke="#333" stroke-width="1.6" fill="none"/></svg>
<div class="a" style="left:0;top:515px;width:690px;height:19px;background:linear-gradient(#e4e7eb,#d6dae0 70%,#c5cad1 85%,#dfe2e6)"></div>
<div class="a" style="left:-1px;top:519px;font-size:8.7px;color:#333;line-height:11px;white-space:nowrap">绘制一个球体</div>
<div class="a" style="left:340px;top:517px;width:92px;height:15px;background:linear-gradient(#d8dbe0,#cfd3d9);border-right:1px solid #b5bac1"></div>
<div class="a" style="left:344px;top:520px;font-size:8.5px;color:#333;line-height:10px;white-space:nowrap;letter-spacing:-0.4px">12.0035,6.0056,0.0000</div>
<div class="a" style="left:437px;top:520px;font-size:8px;color:#333;line-height:10px;letter-spacing:0.1px">OpenGL</div>
<div class="a vs" style="left:468px;top:517px;height:14px"></div>
<div class="a" style="left:485px;top:520px;font-size:8.5px;color:#333;line-height:10px">1:1</div>
<svg class="a" style="left:470.0px;top:518.0px" width="13" height="13" viewBox="0 0 16 16"><path d="M3 14L8 2L13 14M5 10H11" stroke="#333" stroke-width="1.2" fill="none"/></svg>
<div class="a" style="left:497px;top:517px;width:14px;height:15px;background:#f4f0a0;border:1px solid #c8c070"></div>
<svg class="a" style="left:497.5px;top:518.0px" width="13" height="13" viewBox="0 0 16 16"><path d="M3 14L8 2L13 14M5 10H11" stroke="#3a6a2a" stroke-width="1.2" fill="none"/><circle cx="11" cy="11" r="2.5" fill="#e8d040"/></svg>
<svg class="a" style="left:513.5px;top:518.0px" width="13" height="13" viewBox="0 0 16 16"><path d="M3 14L8 2L13 14M5 10H11" stroke="#333" stroke-width="1.2" fill="none"/><circle cx="12" cy="6" r="2" fill="none" stroke="#333"/></svg>
<svg class="a" style="left:528.0px;top:518.0px" width="13" height="13" viewBox="0 0 16 16"><rect x="2" y="2" width="12" height="12" fill="#ccc" stroke="#999"/><circle cx="8" cy="10" r="2" fill="#c03030"/></svg>
<svg class="a" style="left:544.5px;top:518.0px" width="13" height="13" viewBox="0 0 16 16"><rect x="2" y="2" width="12" height="12" fill="#bcbcbc" stroke="#999"/></svg>
<svg class="a" style="left:559.5px;top:518.0px" width="13" height="13" viewBox="0 0 16 16"><path d="M4 3V13H14" stroke="#999" stroke-width="1.2" fill="none"/><path d="M7 12H9M11 12H13" stroke="#c06070"/></svg>
<svg class="a" style="left:574.5px;top:518.0px" width="13" height="13" viewBox="0 0 16 16"><circle cx="8" cy="9" r="5.5" fill="#fff" stroke="#333" stroke-width="1.4"/><path d="M8 9L11 6" stroke="#333" stroke-width="1.2"/></svg>
<svg class="a" style="left:590.0px;top:518.0px" width="13" height="13" viewBox="0 0 16 16"><path d="M8 2V14M2 8H14" stroke="#777" stroke-width="1.3"/></svg>
<div class="a" style="left:606px;top:517px;width:14px;height:15px;background:#f4f0a0;border:1px solid #c8c070"></div>
<svg class="a" style="left:606.5px;top:518.0px" width="13" height="13" viewBox="0 0 16 16"><path d="M2 14L13 3M2 14H14" stroke="#333" stroke-width="1.3"/><path d="M5 6L9 11" stroke="#3a8a3a" stroke-width="1.2"/></svg>
<svg class="a" style="left:621.0px;top:518.0px" width="13" height="13" viewBox="0 0 16 16"><path d="M8 1V15M1 8H15" stroke="#111" stroke-width="1.4"/></svg>
<div class="a" style="left:636px;top:520px;font-size:8.5px;font-weight:bold;color:#444;line-height:10px">MODEL</div>
<div class="a" style="left:670px;top:518px;width:2px;height:12px;border-left:2px dotted #9aa0a8"></div>
<svg class="a" style="left:677.0px;top:520.0px" width="12" height="12" viewBox="0 0 16 16"><path d="M14 4V14H4M14 8V14H8M14 12V14H12" stroke="#9aa0a8" stroke-width="1.4" stroke-dasharray="1.4 1.4" fill="none"/></svg>
<div class="a dd" style="left:241px;top:18px;width:131px;height:504px"></div>
<div class="a" style="left:242px;top:19px;width:18px;height:502px;background:#eef1f6;border-right:1px solid #dfe3ea"></div>
<div class="a hl" style="left:242px;top:41px;width:129px;height:16px"></div>
<div class="a it" style="left:264px;top:21.5px;font-size:8px">AEC Entities<small></small></div>
<div class="a arr" style="left:363px;top:24.5px"></div>
<div class="a" style="left:262px;top:37px;width:107px;height:1px;background:#dadde2"></div>
<div class="a it" style="left:264px;top:42.0px">三维网格<small>(3)</small></div>
<div class="a arr" style="left:363px;top:45.0px"></div>
<div class="a it" style="left:264px;top:57.0px">平面模型网格<small></small></div>
<div class="a arr" style="left:363px;top:60.0px"></div>
<div class="a" style="left:262px;top:73px;width:107px;height:1px;background:#dadde2"></div>
<div class="a it" style="left:264px;top:78.5px">直线<small>(L)</small></div>
<svg class="a" style="left:243.5px;top:78px" width="14" height="14" viewBox="0 0 16 16" ><path d="M3 13L13 3" stroke="#34404e" stroke-width="1.6"/></svg>
<div class="a it" style="left:264px;top:93.5px">多段线<small>(P)</small></div>
<svg class="a" style="left:243.5px;top:93px" width="14" height="14" viewBox="0 0 16 16" ><path d="M6 4Q3 6 3.5 9.5Q4 12 7 12H12" stroke="#34404e" stroke-width="1.3" fill="none"/><circle cx="6.5" cy="3.5" r="1" fill="#34404e"/><circle cx="13" cy="12" r="1.4" fill="#fff" stroke="#34404e" stroke-width=".9"/></svg>
<div class="a it" style="left:264px;top:109.0px">多线<small></small></div>
<svg class="a" style="left:243.5px;top:108.5px" width="14" height="14" viewBox="0 0 16 16" ><path d="M3 6L10 13.5M5.5 3.5L13 11" stroke="#34404e" stroke-width="1.8" stroke-linecap="round"/></svg>
<div class="a it" style="left:264px;top:124.5px">样条曲线<small>(S)</small></div>
<svg class="a" style="left:243.5px;top:124px" width="14" height="14" viewBox="0 0 16 16" ><path d="M3 13Q3 9 6 9Q9 9 9 6Q10 3 13 3" stroke="#34404e" stroke-width="1.6" fill="none"/><circle cx="13" cy="3" r="1.2" fill="#8a9098"/><circle cx="3" cy="13" r="1.2" fill="#8a9098"/></svg>
<div class="a it" style="left:264px;top:139.5px">徒手画线<small>(F)</small></div>
<svg class="a" style="left:243.5px;top:139px" width="14" height="14" viewBox="0 0 16 16" ><path d="M4 3Q8 3 6 6Q3 9 5 11Q7 14 10 12" stroke="#34404e" stroke-width="1.7" fill="none"/><circle cx="11" cy="9" r="3" fill="#f2dcb0" opacity=".8"/></svg>
<div class="a it" style="left:264px;top:155.0px">射线<small>(Y)</small></div>
<svg class="a" style="left:243.5px;top:154.5px" width="14" height="14" viewBox="0 0 16 16" ><path d="M4 12L11 5" stroke="#34404e" stroke-width="1.4"/><path d="M13.5 2.5L8.5 4.5L11.5 7.5Z" fill="#34404e"/><path d="M2 11H6M4 9V13" stroke="#34404e" stroke-width="1"/></svg>
<div class="a it" style="left:264px;top:170.5px">无限线<small>(I)</small></div>
<svg class="a" style="left:243.5px;top:170px" width="14" height="14" viewBox="0 0 16 16" ><path d="M3 13L13 3" stroke="#34404e" stroke-width="1.3"/><circle cx="3" cy="13" r="1.5" fill="#34404e"/><circle cx="8" cy="8" r="1.2" fill="#fff" stroke="#34404e"/><circle cx="13" cy="3" r="1.5" fill="#34404e"/></svg>
<div class="a it" style="left:264px;top:185.5px">构造线<small></small></div>
<div class="a arr" style="left:363px;top:188.5px"></div>
<div class="a" style="left:262px;top:202px;width:107px;height:1px;background:#dadde2"></div>
<div class="a it" style="left:264px;top:207.0px">弧<small>(A)</small></div>
<div class="a arr" style="left:363px;top:210.0px"></div>
<div class="a it" style="left:264px;top:222.0px">圆<small>(C)</small></div>
<div class="a arr" style="left:363px;top:225.0px"></div>
<div class="a it" style="left:264px;top:237.5px">椭圆<small>(E)</small></div>
<div class="a arr" style="left:363px;top:240.5px"></div>
<div class="a it" style="left:264px;top:253.0px">椭圆弧<small>(T)</small></div>
<div class="a arr" style="left:363px;top:256.0px"></div>
<div class="a it" style="left:264px;top:268.5px">块<small>(K)</small></div>
<div class="a arr" style="left:363px;top:271.5px"></div>
<div class="a" style="left:262px;top:284px;width:107px;height:1px;background:#dadde2"></div>
<div class="a it" style="left:264px;top:289.0px">点<small>(P)</small></div>
<div class="a arr" style="left:363px;top:292.0px"></div>
<div class="a" style="left:262px;top:305px;width:107px;height:1px;background:#dadde2"></div>
<div class="a it" style="left:264px;top:310.5px">矩形<small>(R)</small></div>
<svg class="a" style="left:243.5px;top:310px" width="14" height="14" viewBox="0 0 16 16" ><rect x="2.5" y="4" width="11" height="8" stroke="#34404e" stroke-width="1.6" fill="#f4f6f8"/><circle cx="13.5" cy="4" r="1.3" fill="#fff" stroke="#34404e" stroke-width=".8"/><circle cx="2.5" cy="12" r="1.3" fill="#fff" stroke="#34404e" stroke-width=".8"/></svg>
<div class="a it" style="left:264px;top:325.5px">螺旋<small>(H)</small></div>
<svg class="a" style="left:243.5px;top:325px" width="14" height="14" viewBox="0 0 16 16" ><ellipse cx="8" cy="3.5" rx="6" ry="2.2" fill="#4a5058"/><ellipse cx="8" cy="8" rx="6" ry="2.2" fill="#4a5058"/><ellipse cx="8" cy="12.5" rx="6" ry="2.2" fill="#4a5058"/><path d="M3 3.5H13M3 8H13M3 12.5H13" stroke="#c8ccd0" stroke-width=".7"/></svg>
<div class="a it" style="left:264px;top:340.5px">多边形<small>(G)</small></div>
<div class="a arr" style="left:363px;top:343.5px"></div>
<div class="a it" style="left:264px;top:356.0px">区域覆盖<small></small></div>
<svg class="a" style="left:243.5px;top:355.5px" width="14" height="14" viewBox="0 0 16 16" ><rect x="2.5" y="2.5" width="11" height="11" stroke="#3a4048" stroke-width="1.8" stroke-dasharray="1.2 1" fill="#fff"/><path d="M5 5H9L11 8V11H5Z" fill="#e8ecf0" stroke="#3a4048" stroke-width="1"/></svg>
<div class="a it" style="left:264px;top:371.5px">边界折线<small>(O)...</small></div>
<svg class="a" style="left:243.5px;top:371px" width="14" height="14" viewBox="0 0 16 16" ><path d="M1.5 3H14.5M1.5 13H14.5" stroke="#3a4048" stroke-width="2"/><path d="M3.5 3V13M12.5 3V13" stroke="#3a4048" stroke-width="1.5"/><path d="M5 5L11 11M11 5L5 11" stroke="#8a9098" stroke-width=".8"/></svg>
<div class="a" style="left:262px;top:388px;width:107px;height:1px;background:#dadde2"></div>
<div class="a it" style="left:264px;top:392.0px">圆环<small>(U)</small></div>
<svg class="a" style="left:243.5px;top:391.5px" width="14" height="14" viewBox="0 0 16 16" ><circle cx="8" cy="8" r="5" stroke="#34404e" stroke-width="1.2" fill="none"/><circle cx="8" cy="8" r="2" stroke="#34404e" stroke-width="1.2" fill="none"/></svg>
<div class="a it" style="left:264px;top:408.0px">平面<small>(N)</small></div>
<svg class="a" style="left:243.5px;top:407.5px" width="14" height="14" viewBox="0 0 16 16" ><path d="M2.5 3H13.5V9H6L2.5 11Z" stroke="#3a4048" stroke-width="1.4" fill="#f4f6f8"/><path d="M6 9L9 13M9 11L13 14" stroke="#3a4048" stroke-width="1.3"/></svg>
<div class="a it" style="left:264px;top:423.0px">绘制边线<small></small></div>
<svg class="a" style="left:243.5px;top:422.5px" width="14" height="14" viewBox="0 0 16 16" ><path d="M3.5 14.5V9Q3.5 4 9 4H14.5V2H9Q1.5 2 1.5 9V14.5Z" stroke="#3a4048" stroke-width="1.3" fill="#fff" stroke-linejoin="round"/></svg>
<div class="a" style="left:262px;top:440px;width:107px;height:1px;background:#dadde2"></div>
<div class="a it" style="left:264px;top:445.0px">边界填充<small>(H)...</small></div>
<svg class="a" style="left:243.5px;top:444.5px" width="14" height="14" viewBox="0 0 16 16" ><rect x="2.5" y="2.5" width="11" height="11" fill="#4a5058"/><path d="M2.5 2.5L13.5 13.5M13.5 2.5L2.5 13.5M2.5 8H13.5M8 2.5V13.5" stroke="#d0d4d8" stroke-width=".8"/></svg>
<div class="a it" style="left:264px;top:460.0px">修订云线<small>(V)</small></div>
<svg class="a" style="left:243.5px;top:459.5px" width="14" height="14" viewBox="0 0 16 16" ><path d="M3 13Q1 10 3 8Q2 5 5 4Q7 2 9 4Q12 3 12.5 6Q15 8 13 11Q13 14 10 13Z" stroke="#3a4048" stroke-width="1.3" fill="#f0f2f4"/></svg>
<div class="a it" style="left:264px;top:474.5px">文字<small>(X)</small></div>
<svg class="a" style="left:243.5px;top:474px" width="14" height="14" viewBox="0 0 16 16" ><text x="8" y="12" font-size="12" font-weight="bold" fill="#2f4f86" text-anchor="middle" font-family="Liberation Sans">A</text><path d="M3 14H13" stroke="#2f4f86" stroke-width="1.2"/></svg>
<div class="a it" style="left:264px;top:490.0px">多行文字<small>(M)...</small></div>
<svg class="a" style="left:243.5px;top:489.5px" width="14" height="14" viewBox="0 0 16 16" ><text x="8" y="13" font-size="12" font-weight="bold" fill="#2f4f86" text-anchor="middle" font-family="Liberation Sans">A</text></svg>
<div class="a it" style="left:264px;top:505.0px">文本到多行文本<small>(U)</small></div>
<svg class="a" style="left:243.5px;top:504.5px" width="14" height="14" viewBox="0 0 16 16" ><text x="6" y="13" font-size="12" font-weight="bold" fill="#2f4f86" text-anchor="middle" font-family="Liberation Sans">A</text><path d="M9 2H14V14H10" stroke="#6a7a8a" stroke-width="1.2" fill="#fff"/><path d="M10 5H13M10 8H13M10 11H13" stroke="#6a7a8a" stroke-width="0.8"/></svg>
<div class="a dd" style="left:371px;top:40px;width:122px;height:312px"></div>
<div class="a" style="left:372px;top:41px;width:18px;height:310px;background:#e4eff0;border-right:1px solid #e2e6ea"></div>
<div class="a hl" style="left:373px;top:145px;width:118px;height:16px"></div>
<div class="a it" style="left:393px;top:43.0px">三维多段线<small>(3)</small></div>
<svg class="a" style="left:374px;top:42.5px" width="14" height="14" viewBox="0 0 16 16" ><path d="M3 11L7 3H13L9 9" stroke="#2f7060" stroke-width="1.2" fill="none"/><path d="M7 7Q12 8 12 12Q10 14 9 11" stroke="#2f7060" stroke-width="1.2" fill="none"/></svg>
<div class="a" style="left:392px;top:59px;width:98px;height:1px;background:#dadde2"></div>
<div class="a it" style="left:393px;top:64.5px">楔体<small>(W)</small></div>
<svg class="a" style="left:374px;top:64px" width="14" height="14" viewBox="0 0 16 16" ><path d="M2.5 12L6 3.5L13 5L11.5 13.5Z" stroke="#2f7060" stroke-width="1.1" fill="#dff2ec"/><path d="M6 3.5L9 12.5" stroke="#2f7060" stroke-width=".9"/></svg>
<div class="a it" style="left:393px;top:79.5px">锥形<small>(P)</small></div>
<svg class="a" style="left:374px;top:79px" width="14" height="14" viewBox="0 0 16 16" ><path d="M8 2L13.5 9L8 14L2.5 9Z" stroke="#2f7060" stroke-width="1.1" fill="#dff2ec"/><path d="M8 2V14M2.5 9L8 11L13.5 9" stroke="#2f7060" stroke-width=".9" fill="none"/></svg>
<div class="a it" style="left:393px;top:94.5px">长方体<small>(B)</small></div>
<svg class="a" style="left:374px;top:94px" width="14" height="14" viewBox="0 0 16 16" ><path d="M8 1.5L13.5 4.5V11.5L8 14.5L2.5 11.5V4.5Z" stroke="#2f7060" stroke-width="1.1" fill="#dff2ec"/><path d="M2.5 4.5L8 7.5L13.5 4.5M8 7.5V14.5" stroke="#2f7060" stroke-width=".9" fill="none"/></svg>
<div class="a" style="left:392px;top:110px;width:98px;height:1px;background:#dadde2"></div>
<div class="a it" style="left:393px;top:115.0px">圆锥体<small>(C)</small></div>
<svg class="a" style="left:374px;top:114.5px" width="14" height="14" viewBox="0 0 16 16" ><path d="M8 1.5L13.5 12.5Q8 15.5 2.5 12.5Z" stroke="#2f7060" stroke-width="1.1" fill="#dff2ec"/><path d="M8 1.5L8 14" stroke="#2f7060" stroke-width=".8"/></svg>
<div class="a it" style="left:393px;top:130.5px">圆柱体<small>(Y)</small></div>
<svg class="a" style="left:374px;top:130px" width="14" height="14" viewBox="0 0 16 16" ><path d="M3.5 4V12Q8 15 12.5 12V4Q8 1 3.5 4Z" stroke="#2f7060" stroke-width="1.1" fill="#dff2ec"/><path d="M3.5 4Q8 7 12.5 4M6 6V13.5M10 6V13.5" stroke="#2f7060" stroke-width=".9" fill="none"/></svg>
<div class="a it" style="left:393px;top:146.0px">球体<small>(S)</small></div>
<svg class="a" style="left:374px;top:145.5px" width="14" height="14" viewBox="0 0 16 16" ><circle cx="8" cy="8" r="5.8" stroke="#2f7060" stroke-width="1.1" fill="#dff2ec"/><path d="M2.2 8H13.8M8 2.2V13.8M5 3Q3 8 5 13M11 3Q13 8 11 13M3 5H13M3 11H13" stroke="#2f7060" stroke-width="0.8" fill="none"/></svg>
<div class="a" style="left:392px;top:163px;width:98px;height:1px;background:#dadde2"></div>
<div class="a it" style="left:393px;top:167.5px">圆底<small>(D)</small></div>
<svg class="a" style="left:374px;top:167px" width="14" height="14" viewBox="0 0 16 16" ><path d="M2 6Q8 3.5 14 6Q13.5 13 8 13Q2.5 13 2 6Z" stroke="#2f7060" stroke-width="1.1" fill="#dff2ec"/><path d="M2 6Q8 9 14 6" stroke="#2f7060" stroke-width=".9" fill="none"/></svg>
<div class="a it" style="left:393px;top:182.5px">圆顶<small>(M)</small></div>
<svg class="a" style="left:374px;top:182px" width="14" height="14" viewBox="0 0 16 16" ><path d="M2 11Q2 4 8 4Q14 4 14 11Q8 14 2 11Z" stroke="#2f7060" stroke-width="1.1" fill="#dff2ec"/><path d="M2 10.5Q8 8 14 10.5" stroke="#2f7060" stroke-width=".9" fill="none"/></svg>
<div class="a it" style="left:393px;top:197.5px">圆环体<small>(T)</small></div>
<svg class="a" style="left:374px;top:197px" width="14" height="14" viewBox="0 0 16 16" ><circle cx="8" cy="8" r="6" fill="#2f7a60"/><circle cx="8" cy="8" r="4" fill="none" stroke="#8fcfb0" stroke-width=".7"/><circle cx="8" cy="8" r="1.8" fill="#e8f8f0"/></svg>
<div class="a" style="left:392px;top:214px;width:98px;height:1px;background:#dadde2"></div>
<div class="a it" style="left:393px;top:218.0px">网格<small>(H)</small></div>
<svg class="a" style="left:374px;top:217.5px" width="14" height="14" viewBox="0 0 16 16" ><path d="M3 2L8 5L13 8V13L3 14Z" fill="#a8d8c0" stroke="#2f7060" stroke-width="1"/><path d="M3 4.5H8M3 7H11M3 9.5H13M3 12H13M5.5 3V14M8 5V14M10.5 6.5V14" stroke="#2f7060" stroke-width="0.9" stroke-dasharray="1.2 1.2"/></svg>
<div class="a" style="left:392px;top:235px;width:98px;height:1px;background:#dadde2"></div>
<div class="a it" style="left:393px;top:239.5px">多面网格<small>(L)</small></div>
<svg class="a" style="left:374px;top:239px" width="14" height="14" viewBox="0 0 16 16" ><path d="M3 14V7L7 3H13V9L9 13V14Z" stroke="#2f7060" stroke-width="1.1" fill="#dff2ec"/><path d="M3 7H9V14M9 7L13 3" stroke="#2f7060" stroke-width=".9" fill="none"/></svg>
<div class="a it" style="left:393px;top:254.5px">面<small>(F)</small></div>
<svg class="a" style="left:374px;top:254px" width="14" height="14" viewBox="0 0 16 16" ><path d="M2.5 13L6 4.5H13L10 13Z" stroke="#2f7060" stroke-width="1.1" fill="#dff2ec"/><path d="M4 10H11" stroke="#2f7060" stroke-width=".8"/></svg>
<div class="a it" style="left:393px;top:269.5px">多边形网格<small>(H)</small></div>
<svg class="a" style="left:374px;top:269px" width="14" height="14" viewBox="0 0 16 16" ><path d="M2.5 6Q2.5 3 8 3Q13.5 3 13.5 6V13H2.5Z" stroke="#2f7060" stroke-width="1.1" fill="#dff2ec"/><path d="M2.5 8.5H13.5M8 3V13" stroke="#2f7060" stroke-width=".9"/></svg>
<div class="a" style="left:392px;top:286px;width:98px;height:1px;background:#dadde2"></div>
<div class="a it" style="left:393px;top:291.0px">旋转曲面<small>(V)</small></div>
<svg class="a" style="left:374px;top:290.5px" width="14" height="14" viewBox="0 0 16 16" ><ellipse cx="8" cy="4" rx="5.5" ry="2" stroke="#2f7060" stroke-width="1.1" fill="#dff2ec"/><path d="M3 5L6.5 9L3.5 13H12.5L9.5 9L13 5" stroke="#2f7060" stroke-width="1" fill="none"/></svg>
<div class="a it" style="left:393px;top:306.5px">直纹表面<small>(U)</small></div>
<svg class="a" style="left:374px;top:306px" width="14" height="14" viewBox="0 0 16 16" ><path d="M2 8Q2 2 8 2Q14 2 14 8Q14 14 8 14Q2 14 2 8Z" stroke="#2f7060" stroke-width="1.1" fill="#dff2ec"/><path d="M5 3V13M8 2V14M11 3V13" stroke="#2f7060" stroke-width=".9"/></svg>
<div class="a it" style="left:393px;top:322.0px">挤压表面<small>(X)</small></div>
<svg class="a" style="left:374px;top:321.5px" width="14" height="14" viewBox="0 0 16 16" ><rect x="2" y="3" width="12" height="10" stroke="#2f7060" stroke-width="1.1" fill="#dff2ec"/><path d="M2 8H14M6 3V13M10 3V13" stroke="#2f7060" stroke-width=".9"/></svg>
<div class="a it" style="left:393px;top:337.0px">孔斯曲面表面<small>(O)</small></div>
<svg class="a" style="left:374px;top:336.5px" width="14" height="14" viewBox="0 0 16 16" ><path d="M3 2.5L13 4V13.5L4 12Z" stroke="#2f7060" stroke-width="1.1" fill="#dff2ec"/><path d="M3 2.5Q6 8 4 12M4 7L13 9" stroke="#2f7060" stroke-width=".9" fill="none"/></svg>
</body></html>
